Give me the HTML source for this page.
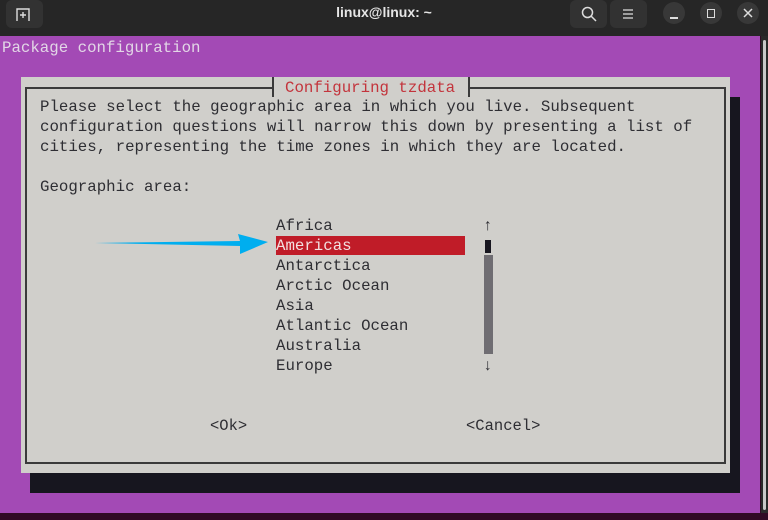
<!DOCTYPE html>
<html><head><meta charset="utf-8"><style>
*{margin:0;padding:0;box-sizing:border-box}
body{width:768px;height:520px;overflow:hidden;background:#300a24;position:relative;font-family:"Liberation Mono",monospace}
.tb{position:absolute;left:0;top:0;width:768px;height:36px;background:#262626}
.term{position:absolute;left:0;top:36px;width:760px;height:477px;background:#a34ab5}
.sb{position:absolute;left:761px;top:36px;width:7px;height:477px;background:#2a2a2a}
.sb i{position:absolute;left:2px;top:4px;width:3px;height:470px;background:#c8c8c8;border-radius:2px}
.t{position:absolute;font-size:15.75px;line-height:20px;white-space:pre;color:#2e2e33}
.shadow{position:absolute;left:30px;top:97px;width:710px;height:396px;background:#17161f}
.dlg{position:absolute;left:21px;top:77px;width:709px;height:396px;background:#d0cfcb}
.bord{position:absolute;left:25px;top:87px;width:701px;height:377px;border:2px solid #3a3a3a}
.btn{position:absolute;width:37px;height:30px;border-radius:6px;background:#323232;top:0}
.circ{position:absolute;width:22px;height:22px;border-radius:11px;background:#383838;top:2px}
</style></head><body>
<div class="tb">
 <div class="btn" style="left:6px;top:0;height:28px"></div>
 <svg style="position:absolute;left:15px;top:6px" width="18" height="16"><path d="M2 15V3h12v12M8 6v6M5 9h6" stroke="#ddd" fill="none" stroke-width="1.4"/></svg>
 <div style="position:absolute;left:0;width:768px;top:4px;text-align:center;color:#e6e6e6;font:bold 14px 'Liberation Sans',sans-serif">linux@linux: ~</div>
 <div class="btn" style="left:570px;height:28px"></div>
 <svg style="position:absolute;left:580px;top:5px" width="18" height="18"><circle cx="7.5" cy="7.5" r="5" stroke="#ddd" fill="none" stroke-width="1.5"/><path d="M11 11l5 5" stroke="#ddd" stroke-width="1.5"/></svg>
 <div class="btn" style="left:610px;height:28px"></div>
 <svg style="position:absolute;left:620px;top:6px" width="16" height="16"><path d="M3 4h10M3 8h10M3 12h10" stroke="#ddd" stroke-width="1.3"/></svg>
 <div class="circ" style="left:663px"></div><div style="position:absolute;left:670px;top:17px;width:8px;height:1.5px;background:#ddd"></div>
 <div class="circ" style="left:700px"></div><div style="position:absolute;left:707px;top:9px;width:8px;height:9px;border:1.5px solid #ddd"></div>
 <div class="circ" style="left:737px"></div><svg style="position:absolute;left:742px;top:7px" width="12" height="12"><path d="M2 2l8 8M10 2l-8 8" stroke="#ddd" stroke-width="1.5"/></svg>
</div>
<div class="term"></div>
<div class="sb"><i></i></div>
<div class="t" style="left:2px;top:38px;color:#e2d6e6">Package configuration</div>
<div class="shadow"></div>
<div class="dlg"></div>
<div class="bord"></div>
<div style="position:absolute;left:272px;top:77px;width:198px;height:20px;background:#d0cfcb;border-left:2px solid #3a3a3a;border-right:2px solid #3a3a3a"></div>
<div class="t" style="left:285px;top:78px;color:#c3343c">Configuring tzdata</div>
<div class="t" style="left:40px;top:97px">Please select the geographic area in which you live. Subsequent
configuration questions will narrow this down by presenting a list of
cities, representing the time zones in which they are located.

Geographic area:</div>
<div style="position:absolute;left:276px;top:236px;width:189px;height:19px;background:#c01c28"></div>
<div class="t" style="left:276px;top:216px">Africa
<span style="color:#f2e0e0">Americas</span>
Antarctica
Arctic Ocean
Asia
Atlantic Ocean
Australia
Europe</div>
<div class="t" style="left:483px;top:216px">↑</div>
<div class="t" style="left:483px;top:356px">↓</div>
<div style="position:absolute;left:484px;top:255px;width:9px;height:99px;background:#6f6d72"></div>
<div style="position:absolute;left:485px;top:240px;width:6px;height:13px;background:#17161f"></div>
<svg style="position:absolute;left:90px;top:230px" width="190" height="30"><path d="M5 13 L150 11 L148 4 L178 12 L150 24 L150 16 Z" fill="#00aeef"/></svg>
<div class="t" style="left:210px;top:416px;font-size:15.5px">&lt;Ok&gt;</div>
<div class="t" style="left:466px;top:416px;font-size:15.5px">&lt;Cancel&gt;</div>
</body></html>
